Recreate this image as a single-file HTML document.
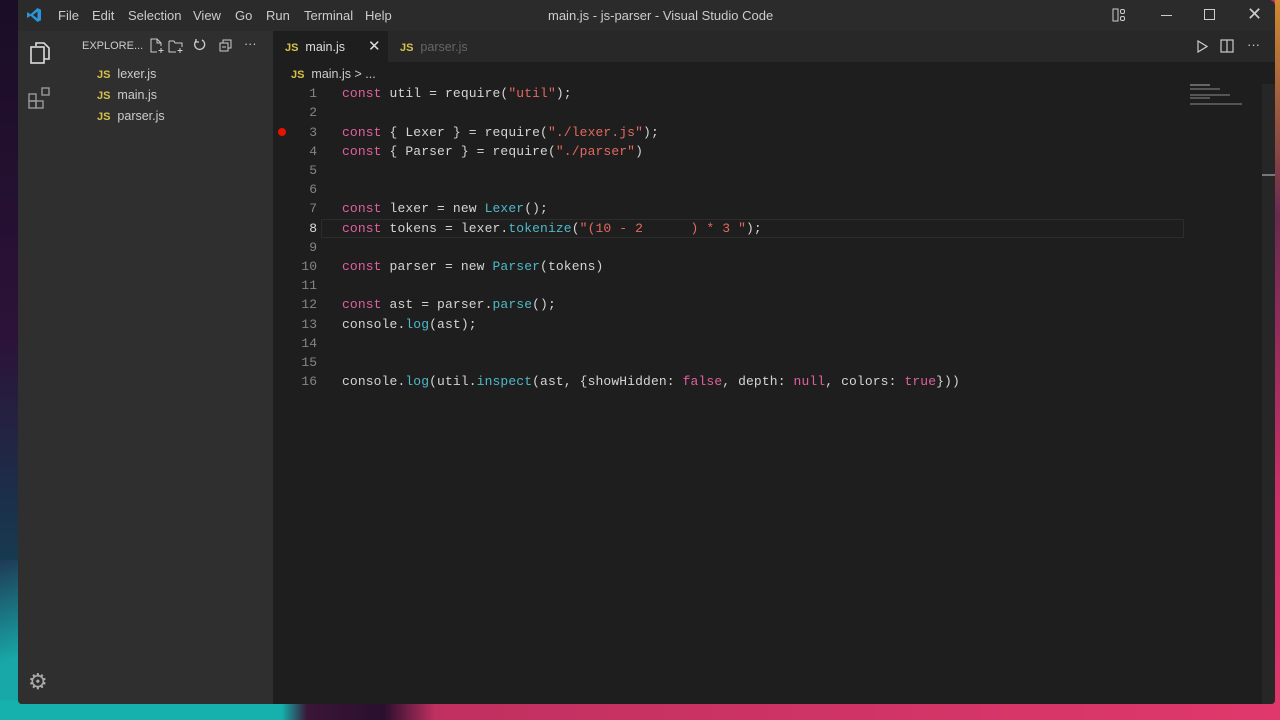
<!DOCTYPE html>
<html><head><meta charset="utf-8"><style>
*{margin:0;padding:0;box-sizing:border-box}
body{width:1280px;height:720px;overflow:hidden;position:relative;font-family:"Liberation Sans",sans-serif;
background:linear-gradient(115deg,#2a1238 0%,#1d0f2c 40%,#3a1540 60%,#c8306a 75%,#e2356e 100%);}
#win{position:absolute;left:18px;top:0;width:1257px;height:704px;background:#1e1e1e;overflow:hidden;border-radius:0 6px 4px 4px}
#title{position:absolute;left:0;top:0;width:100%;height:31px;background:#2b2b2b;color:#ccc;font-size:13px}
#title span{position:absolute;top:8px}
#act{position:absolute;left:0;top:31px;width:44px;bottom:0;background:#2f2f2f}
#side{position:absolute;left:44px;top:31px;width:211px;bottom:0;background:#2f2f2f;color:#ccc;font-size:12.5px}
#tabs{position:absolute;left:255px;top:31px;right:0;height:31px;background:#282828}
.code{position:absolute;left:255px;top:86px;font-family:"Liberation Mono",monospace;font-size:13px;letter-spacing:0.12px;color:#d4d4d4}
.ln{position:absolute;width:44px;text-align:right;left:0;color:#858585;letter-spacing:0}
.tx{position:absolute;left:69px;white-space:pre}
.k{color:#e0609e}.s{color:#e4695f}.f{color:#4fb8c8}.c{color:#4fb8c8}
.js{color:#d6c24a;font-weight:bold;font-size:11px}
</style></head><body>
<div style="position:absolute;left:0;top:560px;width:40px;height:160px;background:linear-gradient(160deg,#1e3a55,#18a8a8 60%)"></div>
<div style="position:absolute;left:0;top:700px;width:1280px;height:20px;background:linear-gradient(90deg,#16b1ad 0%,#16b1ad 22%,#3a1638 24%,#2a0f2e 30%,#c03060 34%,#e0386c 100%)"></div>
<div style="position:absolute;left:0;top:0;width:18px;height:560px;background:linear-gradient(180deg,#1a0d26,#2c1238 60%,#163a50)"></div>
<div style="position:absolute;left:1275px;top:0;width:5px;height:720px;background:linear-gradient(180deg,#d08a30,#6a2a50 30%,#d0306a 70%,#e0386c)"></div>
<div id="win">
<div id="title">
<svg style="position:absolute;left:8px;top:7px" width="16" height="16" viewBox="0 0 16 16"><path d="M11.5 1 L15 2.7 V13.3 L11.5 15 L4.5 8.7 L1.8 10.8 L1 10.3 V5.7 L1.8 5.2 L4.5 7.3 Z M11.5 4.5 L7 8 L11.5 11.5Z" fill="#2a95d9" fill-rule="evenodd"/></svg>
<span style="left:40px">File</span><span style="left:74px">Edit</span><span style="left:110px">Selection</span><span style="left:175px">View</span><span style="left:217px">Go</span><span style="left:248px">Run</span><span style="left:286px">Terminal</span><span style="left:347px">Help</span>
<span style="left:530px">main.js - js-parser - Visual Studio Code</span>
<svg style="position:absolute;left:1094px;top:8px" width="14" height="14" viewBox="0 0 14 14" fill="none" stroke="#ccc"><rect x="1" y="1" width="5" height="12"/><rect x="8.5" y="1.5" width="4" height="4" rx="1.5"/><rect x="8.5" y="8.5" width="4" height="4" rx="1.5"/></svg>
<div style="position:absolute;left:1143px;top:15px;width:11px;height:1px;background:#ccc"></div>
<div style="position:absolute;left:1186px;top:9px;width:11px;height:11px;border:1px solid #ccc"></div>
<span style="left:1229px;top:4px;font-size:18px">✕</span>
</div>
<div id="act">
<svg style="position:absolute;left:11px;top:10px" width="22" height="24" viewBox="0 0 22 24" fill="none" stroke="#ddd" stroke-width="1.6"><path d="M7 5 V2 H15 L20 7 V18 H15"/><rect x="2" y="6" width="13" height="16"/></svg>
<svg style="position:absolute;left:10px;top:55px" width="24" height="24" viewBox="0 0 24 24" fill="none" stroke="#999" stroke-width="1.4"><rect x="1" y="8" width="7" height="7"/><rect x="1" y="15" width="7" height="7"/><rect x="8" y="15" width="7" height="7"/><rect x="14" y="2" width="7" height="7"/></svg>
<span style="position:absolute;left:10px;top:638px;color:#aaa;font-size:22px">⚙</span>
</div>
<div id="side">
<span style="position:absolute;left:20px;top:9px;font-size:11px">EXPLORE...</span>
<svg style="position:absolute;left:88px;top:7px" width="14" height="16" viewBox="0 0 14 16" fill="none" stroke="#ccc"><path d="M7 14H1V1h6l4 4v3M7 1v4h4"/><path d="M11 10v5M8.5 12.5h5"/></svg>
<svg style="position:absolute;left:106px;top:7px" width="16" height="16" viewBox="0 0 16 16" fill="none" stroke="#ccc"><path d="M1 3h5l1 2h7v4M1 3v11h7"/><path d="M12 10v5M9.5 12.5h5"/></svg>
<svg style="position:absolute;left:131px;top:7px" width="14" height="14" viewBox="0 0 14 14" fill="none" stroke="#ccc" stroke-width="1.3"><path d="M3 3a5 5 0 1 0 6-1"/><path d="M3 1v3h3"/></svg>
<svg style="position:absolute;left:157px;top:8px" width="13" height="13" viewBox="0 0 13 13" fill="none" stroke="#ccc"><rect x="1" y="4" width="8" height="8"/><path d="M4 4V1h8v8H9M3 8h4"/></svg>
<span style="position:absolute;left:182px;top:6px">···</span>
<span style="position:absolute;left:35px;top:36px"><b class="js">JS</b>&nbsp; lexer.js</span>
<span style="position:absolute;left:35px;top:57px"><b class="js">JS</b>&nbsp; main.js</span>
<span style="position:absolute;left:35px;top:78px"><b class="js">JS</b>&nbsp; parser.js</span>
</div>
<div id="tabs">
<div style="position:absolute;left:0;top:0;width:115px;height:31px;background:#1e1e1e;color:#ddd;font-size:12.5px">
<span style="position:absolute;left:12px;top:9px"><b class="js">JS</b>&nbsp; main.js</span><span style="position:absolute;left:95px;top:6px;font-size:15px">✕</span></div>
<span style="position:absolute;left:127px;top:9px;font-size:12.5px;color:#666"><b class="js">JS</b>&nbsp; parser.js</span>
<svg style="position:absolute;left:923px;top:9px" width="12" height="13" viewBox="0 0 12 13" fill="none" stroke="#ccc" stroke-width="1.2"><path d="M2 1l9 5.5L2 12z"/></svg>
<svg style="position:absolute;left:947px;top:8px" width="14" height="14" viewBox="0 0 14 14" fill="none" stroke="#ccc" stroke-width="1.2"><rect x="1" y="1" width="12" height="12"/><path d="M7 1v12"/></svg>
<span style="position:absolute;left:974px;top:6px;color:#ccc;font-size:13px">···</span>
</div>
<span style="position:absolute;left:273px;top:67px;font-size:12.5px;color:#ccc"><b class="js">JS</b>&nbsp; main.js &gt; ...</span>
<div style="position:absolute;left:303px;top:219px;width:863px;height:19px;border:1px solid #2c2c2c"></div>
<div style="position:absolute;left:260px;top:128px;width:8px;height:8px;border-radius:50%;background:#e51400"></div>
<div class="code">
<div class="ln" style="top:0">1</div><div class="tx" style="top:0"><span class="k">const</span> util = require(<span class="s">"util"</span>);</div>
<div class="ln" style="top:19px">2</div>
<div class="ln" style="top:39px">3</div><div class="tx" style="top:39px"><span class="k">const</span> { Lexer } = require(<span class="s">"./lexer.js"</span>);</div>
<div class="ln" style="top:58px">4</div><div class="tx" style="top:58px"><span class="k">const</span> { Parser } = require(<span class="s">"./parser"</span>)</div>
<div class="ln" style="top:77px">5</div>
<div class="ln" style="top:96px">6</div>
<div class="ln" style="top:115px">7</div><div class="tx" style="top:115px"><span class="k">const</span> lexer = new <span class="c">Lexer</span>();</div>
<div class="ln" style="top:135px;color:#ddd">8</div><div class="tx" style="top:135px"><span class="k">const</span> tokens = lexer.<span class="f">tokenize</span>(<span class="s">"(10 - 2      ) * 3 "</span>);</div>
<div class="ln" style="top:154px">9</div>
<div class="ln" style="top:173px">10</div><div class="tx" style="top:173px"><span class="k">const</span> parser = new <span class="c">Parser</span>(tokens)</div>
<div class="ln" style="top:192px">11</div>
<div class="ln" style="top:211px">12</div><div class="tx" style="top:211px"><span class="k">const</span> ast = parser.<span class="f">parse</span>();</div>
<div class="ln" style="top:231px">13</div><div class="tx" style="top:231px">console.<span class="f">log</span>(ast);</div>
<div class="ln" style="top:250px">14</div>
<div class="ln" style="top:269px">15</div>
<div class="ln" style="top:288px">16</div><div class="tx" style="top:288px">console.<span class="f">log</span>(util.<span class="f">inspect</span>(ast, {showHidden: <span class="k">false</span>, depth: <span class="k">null</span>, colors: <span class="k">true</span>}))</div>
</div>
<div style="position:absolute;left:1172px;top:84px;width:20px;height:2px;background:#666"></div>
<div style="position:absolute;left:1172px;top:88px;width:30px;height:2px;background:#555"></div>
<div style="position:absolute;left:1172px;top:94px;width:40px;height:2px;background:#555"></div>
<div style="position:absolute;left:1172px;top:97px;width:20px;height:2px;background:#555"></div>
<div style="position:absolute;left:1172px;top:103px;width:52px;height:2px;background:#555"></div>
<div style="position:absolute;left:1244px;top:84px;width:13px;height:620px;background:#262626"></div>
<div style="position:absolute;left:1244px;top:174px;width:13px;height:2px;background:#777"></div>
</div>
</body></html>
